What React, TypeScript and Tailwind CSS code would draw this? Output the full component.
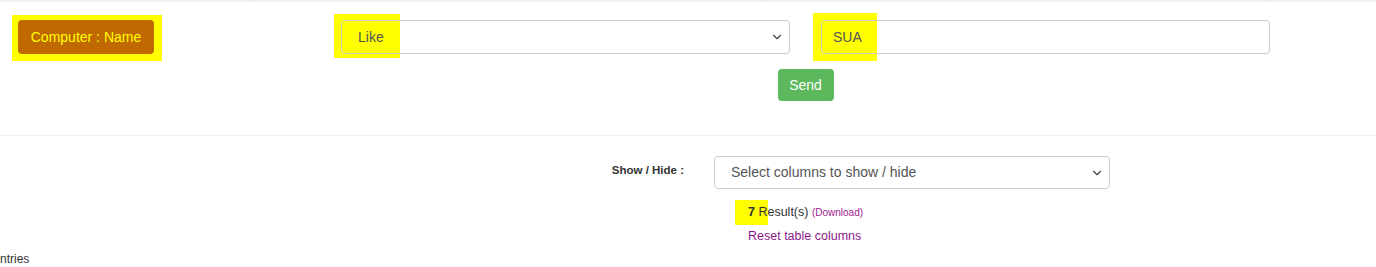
import { ChevronDown } from "lucide-react";

const font = { fontFamily: '"Liberation Sans", Arial, sans-serif' };

export default function App() {
  return (
    <div className="w-[1376px] h-[267px] overflow-hidden bg-white text-[#333]" style={font}>
      {/* top filter panel */}
      <div className="h-[136px] border-b border-[#eee] relative">
        <div className="h-[3px] bg-linear-to-b from-[#ececec] to-white" />
        <div className="flex items-start pt-[12px]">
          <div className="w-[341px] pl-[12px]">
            <div className="inline-block bg-[#ffff00] pl-[6px] pr-[8px] pt-[5px] pb-[7px]">
              <button className="w-[136px] h-[34px] rounded-[4px] bg-[#bf6900] text-[#ffff00] text-[14px]">
                Computer : Name
              </button>
            </div>
          </div>
          <div className="w-[929px] mt-[5px] flex flex-col items-center">
            <div className="flex gap-[31px] w-full">
              {/* operator select */}
              <div className="relative w-[449px] h-[34px]">
                <span className="absolute -left-[7px] -top-[6px] w-[66px] h-[44px] bg-[#ffff00]" />
                <div className="relative flex items-center justify-between h-full border border-[#ccc] rounded-[4px] pl-[16px] pr-[5px] text-[14px] text-[#555]">
                  <span>Like</span>
                  <ChevronDown size={14} strokeWidth={2} className="text-[#444]" />
                </div>
              </div>
              {/* value input */}
              <div className="relative w-[449px] h-[34px]">
                <span className="absolute -left-[8px] -top-[7px] w-[64px] h-[48px] bg-[#ffff00]" />
                <div className="relative flex items-center h-full border border-[#ccc] rounded-[4px] pl-[11px] text-[14px] text-[#555]">
                  SUA
                </div>
              </div>
            </div>
            <button className="mt-[15px] w-[56px] h-[32px] rounded-[4px] bg-[#5cb85c] text-white text-[14px]">
              Send
            </button>
          </div>
        </div>
      </div>

      {/* columns panel */}
      <div className="pt-[20px]">
        <div className="flex items-center">
          <div className="w-[684px] text-right text-[11.5px] font-bold text-[#333] -mt-[4px]">Show / Hide :</div>
          <div className="ml-[30px] w-[396px] h-[33px] flex items-center justify-between border border-[#ccc] rounded-[4px] pl-[16px] pr-[5px] text-[14px] text-[#555]">
            <span>Select columns to show / hide</span>
            <ChevronDown size={14} strokeWidth={2} className="text-[#444]" />
          </div>
        </div>
        <div className="pl-[748px] mt-[14px] text-[12.5px] leading-[18px]">
          <div className="relative">
            <span className="absolute -left-[13px] -top-[3px] w-[33px] h-[25px] bg-[#ffff00]" />
            <span className="relative">
              <b>7</b> Result(s) <a className="text-[10px] text-[#a0208f]">(Download)</a>
            </span>
          </div>
          <div className="mt-[5px] text-[#8b1a89]">Reset table columns</div>
        </div>
        <div className="mt-[5px] text-[12px] leading-[18px]">ntries</div>
      </div>
    </div>
  );
}
